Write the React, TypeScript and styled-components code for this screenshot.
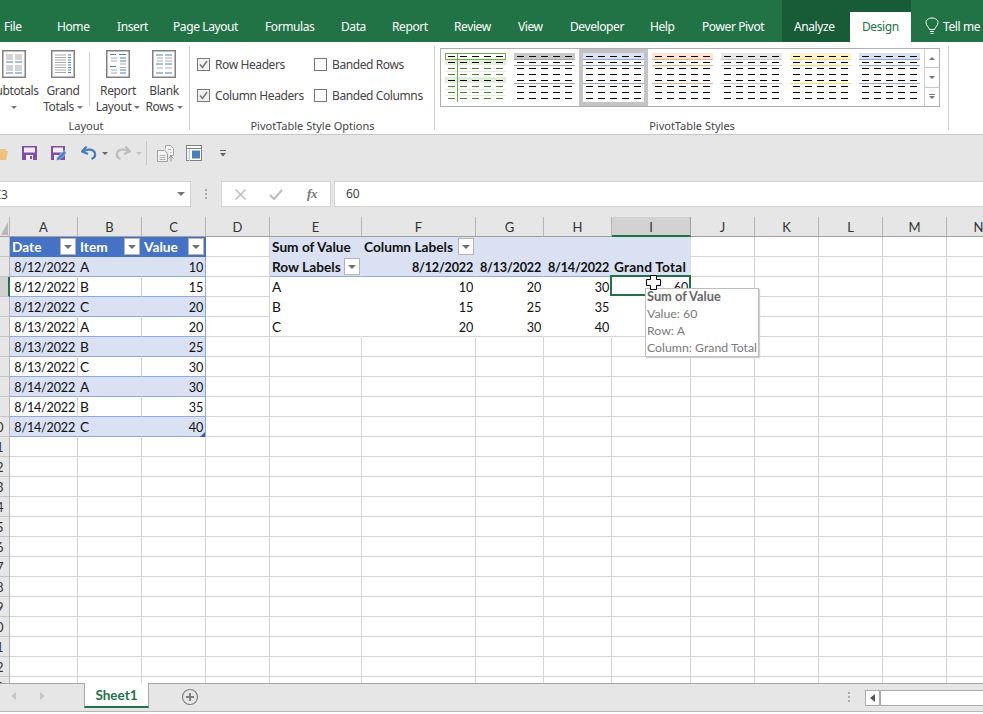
import React from 'react';
import styled, { createGlobalStyle } from 'styled-components';

const Global = createGlobalStyle`
  html, body { margin: 0; padding: 0; width: 983px; height: 714px; overflow: hidden; background: #fff; }
  #root { width: 983px; height: 714px; }
`;

const UI = `"Noto Sans", "Open Sans", sans-serif`;
const CELL = `Lato, "Liberation Sans", sans-serif`;

const Page = styled.div`
  width: 983px; height: 714px; display: flex; flex-direction: column; overflow: hidden;
  font-family: ${UI}; font-size: 12px; letter-spacing: -0.4px; color: #444; background: #fff;
`;

/* ---------- title / tabs ---------- */
const TabStrip = styled.div`
  height: 42px; flex: none; display: flex; background: #217346; padding-left: 4px; box-sizing: border-box;
`;
const Tab = styled.div<{ $w: number }>`
  width: ${p => p.$w}px; flex: none; padding-top: 18px; box-sizing: border-box; line-height: 18px;
  color: #fff; font-size: 12px; white-space: nowrap;
`;
const ContextGroup = styled.div`
  display: flex; background: #185c37; flex: none;
`;
const ContextTab = styled.div<{ $active?: boolean }>`
  width: ${p => (p.$active ? 61 : 68)}px; box-sizing: border-box; padding: ${p => (p.$active ? '6px' : '18px')} 0 0 12px;
  margin-top: ${p => (p.$active ? 12 : 0)}px; line-height: 18px; font-size: 12px; white-space: nowrap;
  color: ${p => (p.$active ? '#217346' : '#fff')}; background: ${p => (p.$active ? '#fff' : 'transparent')};
`;
const TellMe = styled.div`
  display: flex; align-items: flex-start; gap: 4px; padding: 17px 0 0 14px; color: #fff; line-height: 18px; white-space: nowrap;
`;
const TellText = styled.span`
  padding-top: 1px;
`;

/* ---------- ribbon ---------- */
const Ribbon = styled.div`
  height: 93px; flex: none; display: flex; box-sizing: border-box; background: #fff; border-bottom: 1px solid #c6c6c6;
  overflow: hidden;
`;
const RibbonGroup = styled.div<{ $w: number; $ml?: number }>`
  width: ${p => p.$w}px; flex: none; margin-left: ${p => p.$ml ?? 0}px; height: 92px; box-sizing: border-box; display: flex; flex-direction: column;
  position: relative;
  &::after { content: ''; position: absolute; right: 0; top: 4px; bottom: 4px; width: 1px; background: #d2d2d2; }
`;
const GroupBody = styled.div`
  height: 76px; flex: none; display: flex; padding-left: 8px; padding-top: 8px; box-sizing: border-box;
`;
const GroupLabel = styled.div`
  height: 16px; line-height: 16px; text-align: center; font-size: 11px; letter-spacing: 0; color: #444; white-space: nowrap;
`;
const StylesLabel = styled(GroupLabel)`
  margin-top: auto;
`;
const BigButton = styled.div<{ $w: number }>`
  width: ${p => p.$w}px; flex: none; display: flex; flex-direction: column; align-items: center; font-size: 12px; line-height: 16px; color: #444;
`;
const BigIconSvg = styled.svg`
  display: block; flex: none; margin-bottom: 5px;
`;
const BtnLine = styled.div`
  white-space: nowrap; display: flex; align-items: center; gap: 3px; height: 16px;
`;
const Tri = styled.span<{ $c?: string; $s?: number }>`
  display: inline-block; width: 0; height: 0; flex: none;
  border-left: ${p => p.$s ?? 3}px solid transparent; border-right: ${p => p.$s ?? 3}px solid transparent;
  border-top: ${p => p.$s ?? 3}px solid ${p => p.$c ?? '#777'};
`;
const VSep = styled.div`
  width: 1px; height: 54px; background: #d2d2d2; margin: 2px 5px 0 1px; flex: none;
`;
const OptionsGrid = styled.div`
  display: grid; grid-template-columns: 117px 120px; grid-auto-rows: 22px; row-gap: 9px; padding: 11px 0 0 7px; height: 76px; box-sizing: border-box;
`;
const CheckRow = styled.label`
  display: flex; align-items: center; gap: 5px; font-size: 12px; color: #444; white-space: nowrap;
`;
const CheckBox = styled.span<{ $on?: boolean }>`
  width: 13px; height: 13px; box-sizing: border-box; border: 1px solid #777; background: ${p => (p.$on ? '#f1f1f1' : '#fff')};
  display: flex; align-items: center; justify-content: center; flex: none;
`;
const Gallery = styled.div`
  margin: 6px 0 0 5px; width: 500px; height: 59px; box-sizing: border-box; border: 1px solid #abafb4; display: flex; background: #fff;
`;
const Swatch = styled.div<{ $sel?: boolean }>`
  width: 69px; height: 57px; flex: none; box-sizing: border-box;
  border: 4px solid ${p => (p.$sel ? '#c4c4c4' : 'transparent')};
`;
const GalleryScroll = styled.div`
  width: 14px; flex: none; border-left: 1px solid #d0d0d0; display: flex; flex-direction: column;
`;
const ScrollBtn = styled.div`
  flex: 1; display: flex; flex-direction: column; align-items: center; justify-content: center; gap: 1px;
  & + & { border-top: 1px solid #c6c6c6; }
`;
const TriUp = styled.span`
  width: 0; height: 0; border-left: 3px solid transparent; border-right: 3px solid transparent; border-bottom: 3px solid #777;
`;
const Dash = styled.span`
  width: 6px; height: 1px; background: #777;
`;

/* ---------- quick access ---------- */
const Qat = styled.div`
  height: 38px; flex: none; background: #e6e6e6; display: flex; align-items: center; padding-bottom: 2px; box-sizing: border-box;
`;
const QatSlot = styled.div<{ $ml: number }>`
  margin-left: ${p => p.$ml}px; flex: none; display: flex; align-items: center;
`;
const QatSep = styled.div`
  width: 1px; height: 24px; background: #c6c6c6; margin-left: 4px; flex: none;
`;
const Mirror = styled.span`
  display: block; transform: scaleX(-1);
`;

/* ---------- formula bar ---------- */
const FormulaBar = styled.div`
  height: 44px; flex: none; background: #e6e6e6; box-sizing: border-box; padding-top: 8px; display: flex; align-items: flex-start;
`;
const NameBox = styled.div`
  margin-left: -40px; width: 231px; height: 26px; box-sizing: border-box; flex: none; background: #fff; border: 1px solid #d4d4d4;
  display: flex; align-items: center; justify-content: space-between; padding: 0 5px 0 36px; font-family: ${UI}; font-size: 12px; letter-spacing: 0; color: #444;
`;
const Grip = styled.div`
  width: 2px; margin: 8px 0 0 14px; height: 10px; flex: none;
  background: repeating-linear-gradient(to bottom, #aaa 0 2px, transparent 2px 4px);
`;
const FxBox = styled.div`
  margin-left: 14px; width: 110px; height: 26px; box-sizing: border-box; flex: none; background: #fff; border: 1px solid #d4d4d4; display: flex; align-items: center;
`;
const FxSlot = styled.div`
  width: 36px; flex: none; display: flex; align-items: center; justify-content: center; color: #777; font-family: "Liberation Serif", serif; font-style: italic; font-weight: 700; font-size: 13px;
`;
const ValueBox = styled.div`
  margin-left: 3px; flex: 1; height: 26px; margin-right: -4px; box-sizing: border-box; background: #fff; border: 1px solid #d4d4d4; padding-left: 11px; line-height: 24px; color: #444; font-size: 12px; letter-spacing: 0;
`;

/* ---------- sheet ---------- */
const SheetArea = styled.div`
  flex: 1; min-height: 0; position: relative; overflow: hidden; background: #fff;
`;
const Grid = styled.div`
  display: grid;
  grid-template-columns: 10px 68px 64px 64px 64px 92px 114px 68px 68px 79px 64px 64px 64px 64px 64px;
  grid-auto-rows: 20px; width: 1011px;
  font-family: ${CELL}; font-size: 13.7px; letter-spacing: 0; color: #111;
`;
const Corner = styled.div`
  background: #e6e6e6; border-right: 1px solid #b5b5b5; border-bottom: 1px solid #9f9f9f; box-sizing: border-box; position: relative; overflow: hidden;
  &::after { content: ''; position: absolute; right: 1px; bottom: 1px; border-left: 7px solid transparent; border-bottom: 13px solid #b7b7b7; }
`;
const ColHead = styled.div<{ $sel?: boolean }>`
  box-sizing: border-box; background: ${p => (p.$sel ? '#d2d2d2' : '#e6e6e6')}; text-align: center; line-height: 21px; color: #333; font-size: 13px;
  border-right: 1px solid ${p => (p.$sel ? '#9f9f9f' : '#b5b5b5')};
  border-bottom: ${p => (p.$sel ? '2px solid #217346' : '1px solid #9f9f9f')};
`;
const RowHead = styled.div<{ $sel?: boolean }>`
  box-sizing: border-box; background: ${p => (p.$sel ? '#d2d2d2' : '#e6e6e6')}; overflow: hidden; line-height: 20px; color: #333; font-size: 13px;
  border-bottom: 1px solid #c4c4c4; border-right: ${p => (p.$sel ? '2px solid #217346' : '1px solid #b5b5b5')};
`;
const RowNum = styled.div`
  width: 20px; margin-left: -14px; text-align: center;
`;
const Cell = styled.div<{ $bg?: string; $bb?: string; $br?: string; $right?: boolean; $bold?: boolean; $fg?: string; $sel?: boolean; $num?: boolean }>`
  box-sizing: border-box; background: ${p => p.$bg ?? '#fff'}; position: relative; padding: ${p => (p.$num ? '1px 2px 0' : '0 2px')}; display: flex; align-items: center; min-width: 0;
  justify-content: ${p => (p.$right ? 'flex-end' : 'flex-start')};
  white-space: nowrap; line-height: 19px; font-weight: ${p => (p.$bold ? 700 : 400)}; color: ${p => p.$fg ?? '#111'};
  font-size: ${p => (p.$num ? '12.6px' : '13.7px')}; letter-spacing: ${p => (p.$num ? '-0.2px' : '0')};
  border-bottom: 1px solid ${p => p.$bb ?? '#d4d4d4'}; border-right: 1px solid ${p => p.$br ?? '#d4d4d4'};
  ${p => p.$sel && `&::after { content: ''; position: absolute; left: -2px; top: -2px; right: -1px; bottom: 0; border: 2px solid #217346; pointer-events: none; }`}
`;
const GrandLabel = styled.span`
  margin-right: 2px; letter-spacing: 0.2px;
`;
const FilterBtn = styled.span`
  margin: 0 -1px 0 auto; width: 16px; height: 17px; box-sizing: border-box; flex: none; background: #fff; border: 1px solid #b4b4b4;
  display: flex; align-items: center; justify-content: center;
`;
const Handle = styled.span`
  position: absolute; right: 0; bottom: -1px; border-left: 5px solid transparent; border-bottom: 5px solid #3f51b5;
`;
const Tooltip = styled.div`
  position: absolute; left: 645px; top: 71px; width: 114px; height: 69px; box-sizing: border-box; background: #fff;
  border: 1px solid #bdbdbd; box-shadow: 1px 1px 1px #d0d0d0; padding: 0 0 0 1px;
  font-family: ${CELL}; font-size: 12.3px; letter-spacing: 0; line-height: 17px; color: #7a7a7a; white-space: nowrap;
`;
const TipTitle = styled.div`
  font-weight: 700; color: #666; font-size: 12.8px; margin-top: -1px;
`;
const CursorSvg = styled.svg`
  position: absolute; left: 646px; top: 58px;
`;

/* ---------- bottom ---------- */
const BottomBar = styled.div`
  height: 28px; flex: none; box-sizing: border-box; background: #e6e6e6; border-top: 1px solid #a6a6a6; display: flex; align-items: flex-start;
`;
const NavArrow = styled.span<{ $ml: number }>`
  margin: 8px 0 0 ${p => p.$ml}px; width: 0; height: 0; flex: none; border-top: 4px solid transparent; border-bottom: 4px solid transparent;
  border-right: 5px solid #c6c6c6;
`;
const NavArrowR = styled(NavArrow)`
  border-right: 0; border-left: 5px solid #c6c6c6;
`;
const SheetTab = styled.div`
  margin: -1px 0 0 39px; width: 65px; height: 25px; box-sizing: border-box; flex: none; background: #fff; color: #217346;
  border-left: 1px solid #a6a6a6; border-right: 1px solid #a6a6a6; border-bottom: 2px solid #217346;
  font-family: ${CELL}; font-weight: 700; font-size: 13.5px; letter-spacing: 0; line-height: 24px; text-align: center;
`;
const AddSheet = styled.svg`
  margin: 4px 0 0 32px; flex: none; display: block;
`;
const HGrip = styled(Grip)`
  margin: 8px 0 0 649px;
`;
const HScroll = styled.div`
  margin: 6px 0 0 15px; flex: 1; height: 16px; box-sizing: border-box; background: #fff; border: 1px solid #ababab; border-right: 0; display: flex;
`;
const HScrollBtn = styled.div`
  width: 15px; flex: none; border-right: 2px solid #ababab; box-sizing: border-box; display: flex; align-items: center; justify-content: center;
  &::before { content: ''; border-top: 4px solid transparent; border-bottom: 4px solid transparent; border-right: 5px solid #555; }
`;
const Foot = styled.div`
  height: 3px; flex: none; box-sizing: border-box; border-top: 1px solid #b8b8b8; background: #fff;
`;

/* ---------- drawings ---------- */
type L = [number, number, number, string];
const G = '#a9a9a9';
const B = '#4a7ebb';
const seq = (ys: number[], c: string, a: number, b: number): L[] => ys.map(y => [a, b, y, c] as L);

const subtotalLines: L[] = [
  ...seq([5, 7, 9], G, 4, 11), ...seq([5, 7, 9], G, 13, 20), [4, 11, 12, B], [13, 20, 12, B],
  ...seq([16, 18, 20], G, 4, 11), ...seq([16, 18, 20], G, 13, 20), [4, 11, 23, B], [13, 20, 23, B],
];
const grandLines: L[] = [
  ...seq([5, 7.5, 10, 12.5, 15, 17.5, 20, 22.5], G, 4, 15),
  ...seq([5, 7.5, 10, 12.5, 15, 17.5, 20, 22.5], B, 17, 20),
];
const reportLines: L[] = [
  [4, 10, 4.5, B], [13, 20, 4.5, B], [5, 11, 8, G], [14, 20, 8, B], [5, 11, 11, G], [14, 20, 11, B], [14, 20, 14, G],
  [4, 10, 16.5, B], [14, 20, 17.5, G], [5, 11, 20, G], [14, 20, 20, B], [5, 11, 23, G], [14, 20, 23, B],
];
const blankLines: L[] = [
  [4, 11, 5, B], [13, 20, 5, B], [5, 11, 8, G], [13, 20, 8, G], [5, 11, 11, G], [13, 20, 11, G],
  [4, 11, 14, B], [13, 20, 14, B], [5, 11, 18, G], [13, 20, 18, G], [4, 11, 23, B], [13, 20, 23, B],
];

const BigIcon = ({ lines }: { lines: L[] }) => (
  <BigIconSvg width="24" height="28" viewBox="0 0 24 28">
    <rect x="0.75" y="0.75" width="22.5" height="26.5" fill="#fff" stroke="#808080" strokeWidth="1.5" />
    {lines.map(([a, b, y, c], i) => (
      <line key={i} x1={a} x2={b} y1={y} y2={y} stroke={c} strokeWidth="1" />
    ))}
  </BigIconSvg>
);

const CheckMark = () => (
  <svg width="11" height="11" viewBox="0 0 11 11">
    <path d="M2 5.5 L4.5 8.5 L9 2" fill="none" stroke="#777" strokeWidth="1.5" />
  </svg>
);

const rowYs = [3.5, 9.5, 15.5, 21.5, 27.5, 33.5, 39.5, 45.5];
const dashXs = [3, 15, 27, 39, 51];

const SwatchSvg = styled.svg`
  display: block;
`;

const GreenSwatch = () => (
  <SwatchSvg width="61" height="49" viewBox="0 0 61 49">
    <rect x="0" y="6" width="61" height="6" fill="#e2efda" />
    <rect x="0" y="24" width="61" height="6" fill="#e2efda" />
    {[18.5, 36.5, 42.5].map(y => (
      <line key={y} x1="0" x2="61" y1={y} y2={y} stroke="#e2efda" />
    ))}
    <rect x="0.5" y="0.5" width="60" height="6" fill="none" stroke="#70ad47" />
    <line x1="12.5" x2="12.5" y1="0" y2="49" stroke="#70ad47" />
    {rowYs.map((y, i) =>
      dashXs.map(x => (
        <line key={`${i}-${x}`} x1={x} x2={x + 7} y1={y} y2={y} stroke={[0, 1, 4].includes(i) ? '#000' : '#548235'} />
      )),
    )}
  </SwatchSvg>
);

const PlainSwatch = ({ band, line }: { band: string; line: string }) => (
  <SwatchSvg width="61" height="49" viewBox="0 0 61 49">
    <rect x="0" y="0" width="61" height="6" fill={band} />
    {[6.5, 12.5, 30.5].map(y => (
      <line key={y} x1="0" x2="61" y1={y} y2={y} stroke={line} />
    ))}
    {rowYs.map((y, i) =>
      dashXs.map(x => <line key={`${i}-${x}`} x1={x} x2={x + 7} y1={y} y2={y} stroke="#000" />),
    )}
  </SwatchSvg>
);

const styles = [
  { band: '#c9c9c9', line: '#a5a5a5' },
  { band: '#d9e1f2', line: '#8ea9db', sel: true },
  { band: '#fce4d6', line: '#f4b084' },
  { band: '#e7e7e7', line: '#c9c9c9' },
  { band: '#fff2cc', line: '#ffd966' },
  { band: '#d9e1f2', line: '#8ea9db' },
];

const QatSvg = styled.svg`
  display: block;
`;
const SaveIcon = () => (
  <QatSvg width="15" height="14" viewBox="0 0 15 14">
    <path d="M0 0H15V14H0Z" fill="#7f4fa3" />
    <rect x="2" y="1.5" width="11" height="5" fill="#f3eef7" />
    <rect x="4" y="9" width="7" height="5" fill="#f3eef7" />
    <rect x="8" y="10" width="2" height="3" fill="#7f4fa3" />
  </QatSvg>
);
const SaveAsIcon = () => (
  <QatSvg width="16" height="15" viewBox="0 0 16 15">
    <path d="M0 0H14V14H0Z" fill="#7f4fa3" />
    <rect x="2" y="1.5" width="10" height="5" fill="#f3eef7" />
    <rect x="3" y="9" width="5" height="5" fill="#f3eef7" />
    <path d="M5 14.5 L6 11.5 L13 4.5 L15.5 7 L8.5 14 Z" fill="#3f86c6" stroke="#e6e6e6" strokeWidth="0.6" />
  </QatSvg>
);
const UndoIcon = ({ c }: { c: string }) => (
  <QatSvg width="16" height="14" viewBox="0 0 16 14">
    <path d="M2 5.5 C6 2.5 13 3 14 7.5 C14.500 10 13 12 10.500 13" fill="none" stroke={c} strokeWidth="2.2" />
    <path d="M5.500 0.500 L1 5.500 L7 8" fill="none" stroke={c} strokeWidth="2.2" />
  </QatSvg>
);
const DocIcon = () => (
  <QatSvg width="17" height="17" viewBox="0 0 17 17">
    <path d="M0.500 5.500H7.500L10.500 8.500V16.500H0.500Z" fill="#f4f4f4" stroke="#a0a0a0" />
    <path d="M2.500 10.500H8.500M2.500 12.500H8.500M2.500 14.500H8.500" stroke="#b0b0b0" />
    <path d="M8.500 3.500V0.500H13.500L16.500 3.500V10.500H13" fill="#f4f4f4" stroke="#a0a0a0" />
    <path d="M11 4.500H14M13 7.500H14.500" stroke="#b0b0b0" />
    <path d="M11.500 13.500L14 11L16.500 13.500M14 11V16.500" fill="none" stroke="#999" />
  </QatSvg>
);
const FreezeIcon = () => (
  <QatSvg width="16" height="16" viewBox="0 0 16 16">
    <rect x="0.500" y="0.500" width="15" height="15" fill="#fff" stroke="#808080" />
    <path d="M0 3.500H16" stroke="#808080" />
    <path d="M3.500 4V16M0.500 7H3M0.500 10H3M0.500 13H3" stroke="#b9c9de" />
    <rect x="6" y="5.500" width="8" height="8" fill="#4a7ebb" />
  </QatSvg>
);
const Customize = () => (
  <QatSvg width="6" height="7" viewBox="0 0 6 7">
    <path d="M0 0.500H6" stroke="#666" />
    <path d="M0 3H6L3 6.500Z" fill="#666" />
  </QatSvg>
);
const XGlyph = () => (
  <svg width="11" height="11" viewBox="0 0 11 11">
    <path d="M0.500 0.500L10.500 10.500M10.500 0.500L0.500 10.500" stroke="#bdbdbd" strokeWidth="1.500" />
  </svg>
);
const CheckGlyph = () => (
  <svg width="14" height="11" viewBox="0 0 14 11">
    <path d="M1 6L5 10L13 1" fill="none" stroke="#bdbdbd" strokeWidth="2" />
  </svg>
);

const cols = ['A', 'B', 'C', 'D', 'E', 'F', 'G', 'H', 'I', 'J', 'K', 'L', 'M', 'N'];
const tableData = [
  ['8/12/2022', 'A', '10'], ['8/12/2022', 'B', '15'], ['8/12/2022', 'C', '20'],
  ['8/13/2022', 'A', '20'], ['8/13/2022', 'B', '25'], ['8/13/2022', 'C', '30'],
  ['8/14/2022', 'A', '30'], ['8/14/2022', 'B', '35'], ['8/14/2022', 'C', '40'],
];
const pivotData = [
  ['A', '10', '20', '30', '60'],
  ['B', '15', '25', '35', '75'],
  ['C', '20', '30', '40', '90'],
];
const BLUE = '#d9e1f2';
const BLINE = '#8ea9db';
const HEAD = '#4472c4';

const Filter = () => (
  <FilterBtn>
    <Tri $c="#6f6f6f" $s={4} />
  </FilterBtn>
);

function renderCell(row: number, col: number) {
  const key = `${row}-${col}`;
  if (col <= 2 && row === 1) {
    return (
      <Cell key={key} $bg={HEAD} $bb={HEAD} $br={HEAD} $bold $fg="#fff">
        {['Date', 'Item', 'Value'][col]}
        <Filter />
      </Cell>
    );
  }
  if (col <= 2 && row >= 2 && row <= 10) {
    const banded = row % 2 === 0;
    const br = col === 2 ? BLINE : banded ? BLUE : '#d4d4d4';
    return (
      <Cell key={key} $bg={banded ? BLUE : '#fff'} $bb={BLINE} $br={br} $right={col !== 1} $num={col !== 1}>
        {tableData[row - 2][col]}
        {row === 10 && col === 2 && <Handle />}
      </Cell>
    );
  }
  if (col >= 4 && col <= 8 && row === 1) {
    return (
      <Cell key={key} $bg={BLUE} $bb={BLUE} $br={BLUE} $bold>
        {col === 4 && 'Sum of Value'}
        {col === 5 && (
          <>
            Column Labels
            <Filter />
          </>
        )}
      </Cell>
    );
  }
  if (col >= 4 && col <= 8 && row === 2) {
    if (col === 4) {
      return (
        <Cell key={key} $bg={BLUE} $bb={BLINE} $br={BLUE} $bold>
          Row Labels
          <Filter />
        </Cell>
      );
    }
    if (col === 8) {
      return (
        <Cell key={key} $bg={BLUE} $bb={BLINE} $br={BLUE} $bold $right>
          <GrandLabel>Grand Total</GrandLabel>
        </Cell>
      );
    }
    const t = ['8/12/2022', '8/13/2022', '8/14/2022'][col - 5];
    return (
      <Cell key={key} $bg={BLUE} $bb={BLINE} $br={BLUE} $bold $right $num>
        {t}
      </Cell>
    );
  }
  if (col >= 4 && col <= 8 && row >= 3 && row <= 5) {
    return (
      <Cell key={key} $bb={row === 5 ? '#d4d4d4' : '#fff'} $br={col === 8 ? '#d4d4d4' : '#fff'} $right={col > 4} $num={col > 4} $sel={row === 3 && col === 8}>
        {pivotData[row - 3][col - 4]}
      </Cell>
    );
  }
  return <Cell key={key} />;
}

export default function App() {
  const tabs: [string, number][] = [
    ['File', 53], ['Home', 60], ['Insert', 56], ['Page Layout', 92], ['Formulas', 76], ['Data', 51], ['Report', 62],
    ['Review', 64], ['View', 52], ['Developer', 80], ['Help', 52], ['Power Pivot', 80],
  ];
  const rows = Array.from({ length: 23 }, (_, i) => i + 1);
  return (
    <Page>
      <Global />
      <TabStrip>
        {tabs.map(([t, w]) => (
          <Tab key={t} $w={w}>{t}</Tab>
        ))}
        <ContextGroup>
          <ContextTab>Analyze</ContextTab>
          <ContextTab $active>Design</ContextTab>
        </ContextGroup>
        <TellMe>
          <svg width="14" height="18" viewBox="0 0 14 18">
            <path d="M4.500 12.500C4 10 1 9 1 5.500C1 3 3.500 1 7 1C10.500 1 13 3 13 5.500C13 9 10 10 9.500 12.500Z" fill="none" stroke="#fff" />
            <path d="M5 14.500H9M5.500 16.500H8.500" stroke="#fff" />
          </svg>
          <TellText>Tell me</TellText>
        </TellMe>
      </TabStrip>

      <Ribbon>
        <RibbonGroup $w={208} $ml={-18}>
          <GroupBody>
            <BigButton $w={48}>
              <BigIcon lines={subtotalLines} />
              <BtnLine>Subtotals</BtnLine>
              <BtnLine><Tri /></BtnLine>
            </BigButton>
            <BigButton $w={50}>
              <BigIcon lines={grandLines} />
              <BtnLine>Grand</BtnLine>
              <BtnLine>Totals <Tri /></BtnLine>
            </BigButton>
            <VSep />
            <BigButton $w={46}>
              <BigIcon lines={reportLines} />
              <BtnLine>Report</BtnLine>
              <BtnLine>Layout <Tri /></BtnLine>
            </BigButton>
            <BigButton $w={46}>
              <BigIcon lines={blankLines} />
              <BtnLine>Blank</BtnLine>
              <BtnLine>Rows <Tri /></BtnLine>
            </BigButton>
          </GroupBody>
          <GroupLabel>Layout</GroupLabel>
        </RibbonGroup>

        <RibbonGroup $w={245}>
          <OptionsGrid>
            <CheckRow><CheckBox $on><CheckMark /></CheckBox>Row Headers</CheckRow>
            <CheckRow><CheckBox />Banded Rows</CheckRow>
            <CheckRow><CheckBox $on><CheckMark /></CheckBox>Column Headers</CheckRow>
            <CheckRow><CheckBox />Banded Columns</CheckRow>
          </OptionsGrid>
          <GroupLabel>PivotTable Style Options</GroupLabel>
        </RibbonGroup>

        <RibbonGroup $w={514}>
          <Gallery>
            <Swatch><GreenSwatch /></Swatch>
            {styles.map((s, i) => (
              <Swatch key={i} $sel={s.sel}>
                <PlainSwatch band={s.band} line={s.line} />
              </Swatch>
            ))}
            <GalleryScroll>
              <ScrollBtn><TriUp /></ScrollBtn>
              <ScrollBtn><Tri $c="#777" /></ScrollBtn>
              <ScrollBtn><Dash /><Tri $c="#777" /></ScrollBtn>
            </GalleryScroll>
          </Gallery>
          <StylesLabel>PivotTable Styles</StylesLabel>
        </RibbonGroup>
      </Ribbon>

      <Qat>
        <QatSlot $ml={-8}>
          <QatSvg width="16" height="13" viewBox="0 0 16 13">
            <path d="M0 0H6L8 2H14V4H16L14 13H0Z" fill="#efc27e" />
          </QatSvg>
        </QatSlot>
        <QatSlot $ml={14}><SaveIcon /></QatSlot>
        <QatSlot $ml={14}><SaveAsIcon /></QatSlot>
        <QatSlot $ml={14}><UndoIcon c="#4a7ebb" /></QatSlot>
        <QatSlot $ml={5}><Tri $c="#666" /></QatSlot>
        <QatSlot $ml={7}><Mirror><UndoIcon c="#bdbdbd" /></Mirror></QatSlot>
        <QatSlot $ml={5}><Tri $c="#c4c4c4" /></QatSlot>
        <QatSep />
        <QatSlot $ml={10}><DocIcon /></QatSlot>
        <QatSlot $ml={12}><FreezeIcon /></QatSlot>
        <QatSlot $ml={18}><Customize /></QatSlot>
      </Qat>

      <FormulaBar>
        <NameBox>
          I3
          <Tri $c="#777" $s={4} />
        </NameBox>
        <Grip />
        <FxBox>
          <FxSlot><XGlyph /></FxSlot>
          <FxSlot><CheckGlyph /></FxSlot>
          <FxSlot>fx</FxSlot>
        </FxBox>
        <ValueBox>60</ValueBox>
      </FormulaBar>

      <SheetArea>
        <Grid>
          <Corner />
          {cols.map(c => (
            <ColHead key={c} $sel={c === 'I'}>{c}</ColHead>
          ))}
          {rows.map(r => (
            <React.Fragment key={r}>
              <RowHead $sel={r === 3}><RowNum>{r}</RowNum></RowHead>
              {cols.map((_, c) => renderCell(r, c))}
            </React.Fragment>
          ))}
        </Grid>
        <Tooltip>
          <TipTitle>Sum of Value</TipTitle>
          <div>Value: 60</div>
          <div>Row: A</div>
          <div>Column: Grand Total</div>
        </Tooltip>
        <CursorSvg width="15" height="15" viewBox="0 0 15 15">
          <path d="M4.500 0.500H10.500V4.500H14.500V10.500H10.500V14.500H4.500V10.500H0.500V4.500H4.500Z" fill="#fff" stroke="#000" />
        </CursorSvg>
      </SheetArea>

      <BottomBar>
        <NavArrow $ml={11} />
        <NavArrowR $ml={24} />
        <SheetTab>Sheet1</SheetTab>
        <AddSheet width="18" height="18" viewBox="0 0 18 18">
          <circle cx="9" cy="9" r="7.500" fill="none" stroke="#808080" strokeWidth="1.200" />
          <path d="M9 5V13M5 9H13" stroke="#808080" strokeWidth="2" />
        </AddSheet>
        <HGrip />
        <HScroll><HScrollBtn /></HScroll>
      </BottomBar>
      <Foot />
    </Page>
  );
}
